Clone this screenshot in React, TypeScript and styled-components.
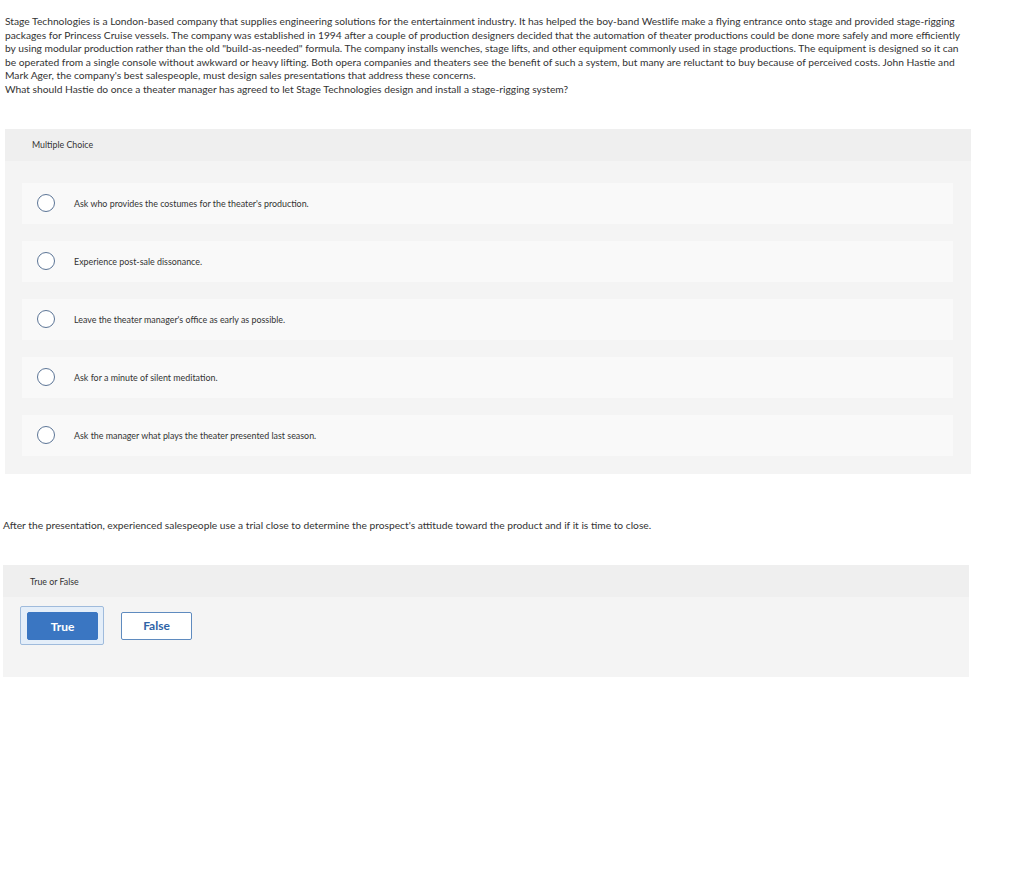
import React from 'react';
import styled, { createGlobalStyle } from 'styled-components';

const GlobalStyle = createGlobalStyle`
  body {
    margin: 0;
    background: #ffffff;
    font-family: Lato, 'Open Sans', sans-serif;
    color: #333333;
  }
`;

const Page = styled.div`
  display: flex;
  flex-direction: column;
  padding-top: 15px;
`;

const Question = styled.section<{ $indent: number }>`
  display: flex;
  flex-direction: column;
  margin-left: ${(p) => p.$indent}px;
`;

const Prompt = styled.p<{ $top?: number }>`
  margin: ${(p) => p.$top ?? 0}px 0 0;
  font-size: 10.25px;
  line-height: 13.6px;
  white-space: nowrap;
`;

const Panel = styled.div<{ $top: number }>`
  width: 966px;
  margin-top: ${(p) => p.$top}px;
  background: #f4f4f4;
`;

const PanelHeader = styled.div<{ $indent: number }>`
  height: 32px;
  display: flex;
  align-items: center;
  padding-left: ${(p) => p.$indent}px;
  background: #efefef;
  font-size: 8.8px;
  color: #333;
`;

const OptionList = styled.div`
  display: flex;
  flex-direction: column;
  gap: 17px;
  padding: 22px 18px 18px 17px;
`;

const Option = styled.label`
  height: 41px;
  display: flex;
  align-items: center;
  background: #f9f9f9;
  font-size: 8.9px;
  color: #333;
`;

const Radio = styled.span`
  width: 16px;
  height: 16px;
  margin-left: 15px;
  margin-right: 19px;
  border: 1px solid #5c7596;
  border-radius: 50%;
  background: #ffffff;
  flex-shrink: 0;
`;

const ButtonRow = styled.div`
  display: flex;
  align-items: center;
  gap: 17px;
  padding: 9px 0 32px 17px;
`;

const Selected = styled.div`
  padding: 5px 5px 4px 6px;
  background: #e4eef9;
  border: 1px solid #9fbbdc;
  border-radius: 2px;
`;

const Choice = styled.button<{ $active?: boolean }>`
  width: 71px;
  height: 28px;
  border-radius: 2px;
  font-family: Lato, 'Open Sans', sans-serif;
  font-size: 12px;
  font-weight: 700;
  cursor: pointer;
  color: ${(p) => (p.$active ? '#ffffff' : '#2e63a6')};
  background: ${(p) => (p.$active ? '#3a76c2' : '#ffffff')};
  border: 1px solid ${(p) => (p.$active ? '#3a76c2' : '#5f8bbf')};
`;

const options = [
  "Ask who provides the costumes for the theater's production.",
  'Experience post-sale dissonance.',
  "Leave the theater manager's office as early as possible.",
  'Ask for a minute of silent meditation.',
  'Ask the manager what plays the theater presented last season.',
];

export default function App() {
  return (
    <Page>
      <GlobalStyle />
      <Question $indent={5}>
        <Prompt>
          Stage Technologies is a London-based company that supplies engineering solutions for the entertainment industry. It has helped the boy-band Westlife make a flying entrance onto stage and provided stage-rigging
          <br />
          packages for Princess Cruise vessels. The company was established in 1994 after a couple of production designers decided that the automation of theater productions could be done more safely and more efficiently
          <br />
          by using modular production rather than the old "build-as-needed" formula. The company installs wenches, stage lifts, and other equipment commonly used in stage productions. The equipment is designed so it can
          <br />
          be operated from a single console without awkward or heavy lifting. Both opera companies and theaters see the benefit of such a system, but many are reluctant to buy because of perceived costs. John Hastie and
          <br />
          Mark Ager, the company's best salespeople, must design sales presentations that address these concerns.
          <br />
          What should Hastie do once a theater manager has agreed to let Stage Technologies design and install a stage-rigging system?
        </Prompt>
        <Panel $top={32}>
          <PanelHeader $indent={27}>Multiple Choice</PanelHeader>
          <OptionList>
            {options.map((text) => (
              <Option key={text}>
                <Radio />
                {text}
              </Option>
            ))}
          </OptionList>
        </Panel>
      </Question>
      <Question $indent={3}>
        <Prompt $top={45}>
          After the presentation, experienced salespeople use a trial close to determine the prospect's attitude toward the product and if it is time to close.
        </Prompt>
        <Panel $top={33}>
          <PanelHeader $indent={27}>True or False</PanelHeader>
          <ButtonRow>
            <Selected>
              <Choice $active>True</Choice>
            </Selected>
            <Choice>False</Choice>
          </ButtonRow>
        </Panel>
      </Question>
    </Page>
  );
}
